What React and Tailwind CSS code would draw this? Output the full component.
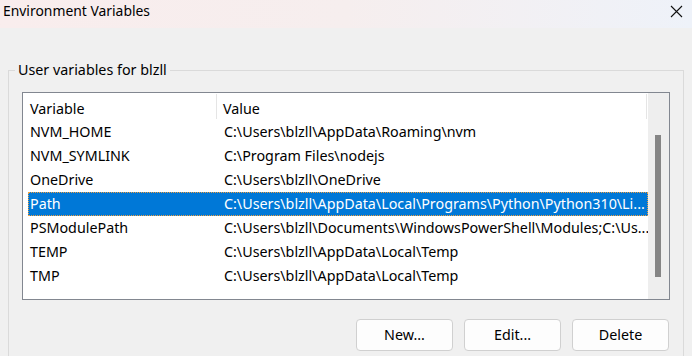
import React from 'react';

const rows = [
  ['NVM_HOME', 'C:\\Users\\blzll\\AppData\\Roaming\\nvm'],
  ['NVM_SYMLINK', 'C:\\Program Files\\nodejs'],
  ['OneDrive', 'C:\\Users\\blzll\\OneDrive'],
  ['Path', 'C:\\Users\\blzll\\AppData\\Local\\Programs\\Python\\Python310\\Li...'],
  ['PSModulePath', 'C:\\Users\\blzll\\Documents\\WindowsPowerShell\\Modules;C:\\Us...'],
  ['TEMP', 'C:\\Users\\blzll\\AppData\\Local\\Temp'],
  ['TMP', 'C:\\Users\\blzll\\AppData\\Local\\Temp'],
];

const font = { fontFamily: '"Noto Sans", "Open Sans", sans-serif' };

const App = () => {
  return (
    <div
      className="w-[692px] h-[356px] overflow-hidden bg-[#f0f0f0] text-black text-[14.3px]"
      style={font}
    >
      {/* title bar */}
      <div className="h-[28px] flex items-center justify-between pl-[3px] pr-[9px] bg-gradient-to-r from-[#f9eded] via-[#f6eeee] to-[#eef2f9]">
        <span className="leading-none -mt-[6px] text-[13.9px]">Environment Variables</span>
        <svg width="13" height="13" viewBox="0 0 13 13" className="-mt-[6px]">
          <path d="M1 1L12 12M12 1L1 12" stroke="#111" strokeWidth="1.1" />
        </svg>
      </div>

      {/* group box */}
      <div className="relative ml-[8px] mr-[8px] mt-[42px] h-[300px] border border-[#dadada] pt-[21px] pl-[13px] pr-[13px]">
        <span className="absolute left-[6px] -top-[12px] px-[3px] bg-[#f0f0f0] leading-[22px]">
          User variables for blzll
        </span>

        {/* list view */}
        <div className="h-[208px] border border-[#828790] bg-white flex">
          <div className="flex-1 min-w-0">
            <div className="h-[27px] flex items-center pl-[7px] pt-[4px] relative">
              <span className="w-[193px]">Variable</span>
              <span>Value</span>
              <div className="absolute left-[193px] top-[1px] h-[25px] w-px bg-[#e5e5e5]" />
              <div className="absolute right-[1px] top-[1px] h-[25px] w-px bg-[#e5e5e5]" />
            </div>
            {rows.map(([name, value]) => {
              const selected = name === 'Path';
              return (
                <div
                  key={name}
                  className={
                    selected
                      ? 'ml-[5px] h-[24px] flex items-center pl-[2px] bg-[#0078d7] text-white outline outline-1 outline-dotted outline-[#f0a040] -outline-offset-1'
                      : 'ml-[5px] h-[24px] flex items-center pl-[2px]'
                  }
                >
                  <span className="w-[194px] shrink-0 whitespace-nowrap">{name}</span>
                  <span className="whitespace-nowrap overflow-hidden">{value}</span>
                </div>
              );
            })}
          </div>
          {/* scrollbar */}
          <div className="w-[21px] bg-[#eeeeee] pt-[42px] pl-[7px]">
            <div className="w-[6px] h-[142px] bg-[#858585]" />
          </div>
        </div>

        {/* buttons */}
        <div className="flex justify-end gap-[11px] mt-[19px] pr-[1px]">
          {['New...', 'Edit...', 'Delete'].map((label) => (
            <button
              key={label}
              className="w-[97px] h-[32px] rounded-[4px] border border-[#d0d0d0] bg-[#fdfdfd] text-[14.3px] text-black"
              style={font}
            >
              {label}
            </button>
          ))}
        </div>
      </div>
    </div>
  );
};

export default App;
